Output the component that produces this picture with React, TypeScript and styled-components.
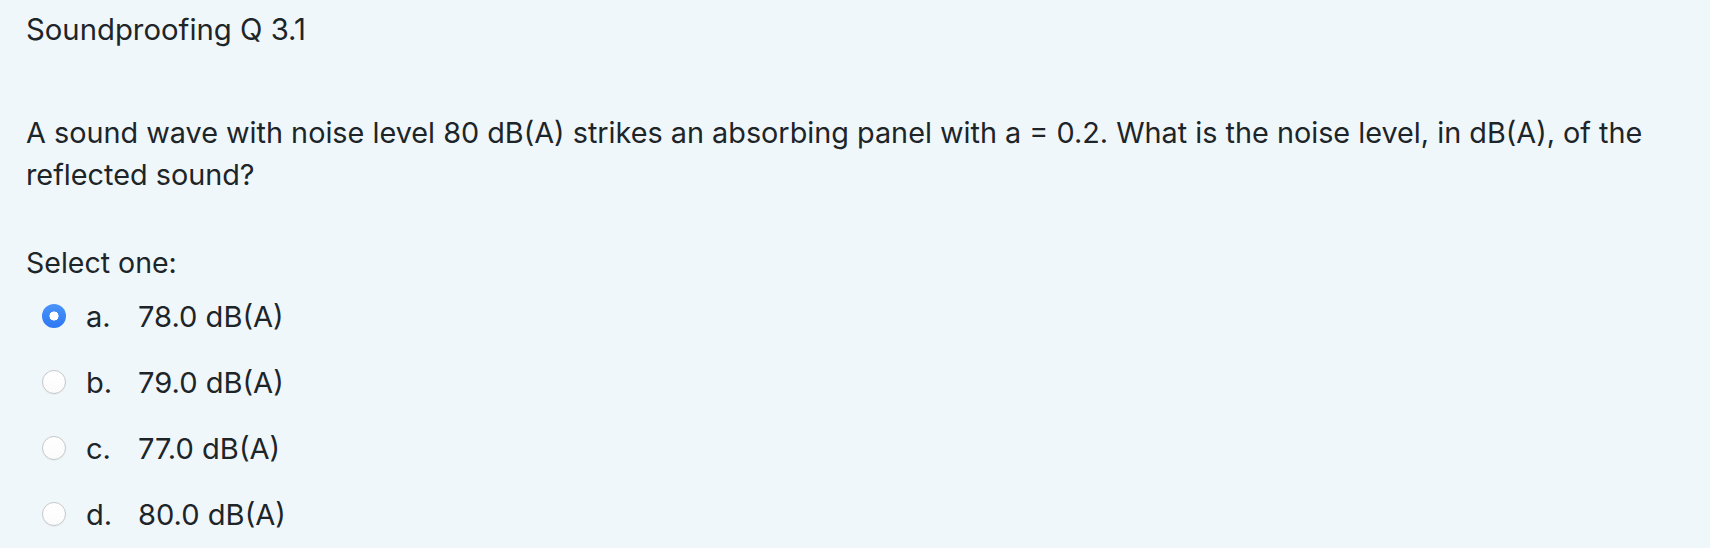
import React from "react";
import styled, { createGlobalStyle, css } from "styled-components";

const GlobalStyle = createGlobalStyle`
  html, body {
    margin: 0;
    padding: 0;
    background: #f0f7fb;
  }
  body {
    font-family: Inter, "Noto Sans", "Liberation Sans", sans-serif;
    color: #1d2529;
  }
`;

const Page = styled.div`
  height: 548px;
  overflow: hidden;
  box-sizing: border-box;
  padding: 9px 26px 0 26px;
  background: #f0f7fb;
  font-size: 28.8px;
  line-height: 42px;
`;

const Title = styled.h3`
  margin: 0;
  font-size: 29.3px;
  font-weight: 400;
  line-height: 42px;
`;

const QuestionText = styled.p`
  margin: 61px 0 0 0;
`;

const Prompt = styled.div`
  margin-top: 46px;
  font-size: 28.5px;
`;

const Options = styled.div`
  display: flex;
  flex-direction: column;
`;

const OptionRow = styled.label`
  display: flex;
  align-items: center;
  height: 66px;
  padding-left: 16px;
  font-size: 29.1px;
`;

const Radio = styled.span<{ $checked?: boolean }>`
  box-sizing: border-box;
  width: 24px;
  height: 24px;
  border-radius: 50%;
  flex: none;
  margin-top: -3px;
  margin-right: 20px;
  ${(p) =>
    p.$checked
      ? css`
          background: radial-gradient(circle at center, #ffffff 0 4.3px, transparent 4.8px),
            linear-gradient(#4a94f9, #2c77f3);
          border: none;
        `
      : css`
          background: linear-gradient(#ffffff, #fbfbfb);
          border: 1px solid #c6c8ca;
          box-shadow: 0 0.5px 1px rgba(0, 0, 0, 0.08);
        `}
`;

const Letter = styled.span`
  display: inline-block;
  width: 52px;
  flex: none;
`;

const AnswerText = styled.span``;

const answers = [
  { letter: "a.", text: "78.0 dB(A)", checked: true },
  { letter: "b.", text: "79.0 dB(A)", checked: false },
  { letter: "c.", text: "77.0 dB(A)", checked: false },
  { letter: "d.", text: "80.0 dB(A)", checked: false },
];

export default function App() {
  return (
    <>
      <GlobalStyle />
      <Page>
        <Title>Soundproofing Q 3.1</Title>
        <QuestionText>
          A sound wave with noise level 80 dB(A) strikes an absorbing panel with a = 0.2. What is the
          noise level, in dB(A), of the reflected sound?
        </QuestionText>
        <Prompt>Select one:</Prompt>
        <Options>
          {answers.map((a) => (
            <OptionRow key={a.letter}>
              <Radio $checked={a.checked} />
              <Letter>{a.letter}</Letter>
              <AnswerText>{a.text}</AnswerText>
            </OptionRow>
          ))}
        </Options>
      </Page>
    </>
  );
}
